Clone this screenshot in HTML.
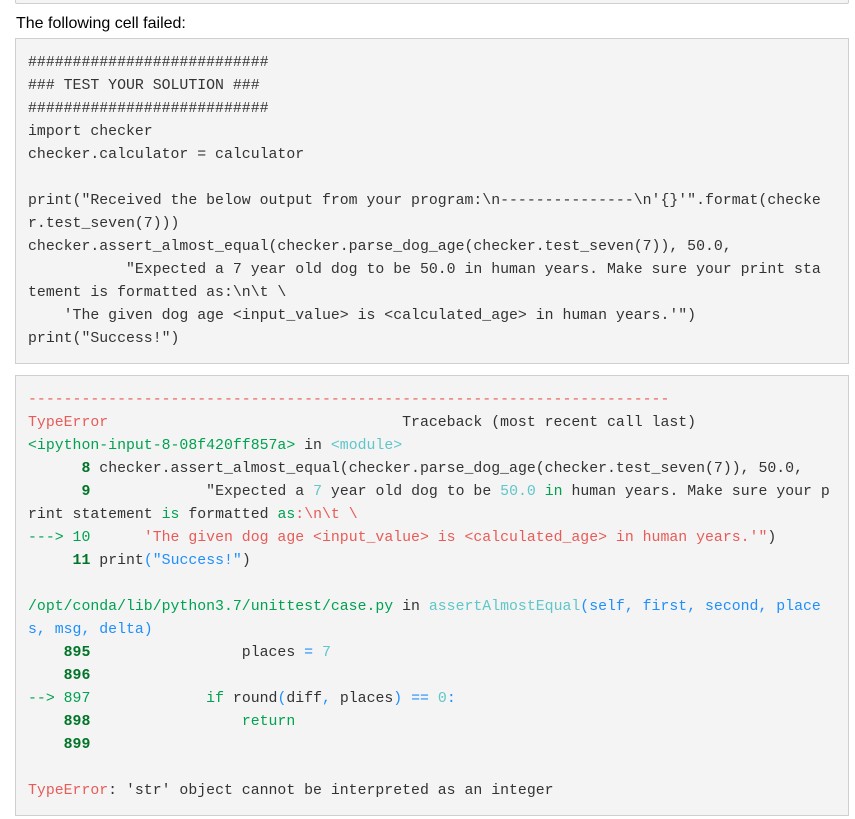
<!DOCTYPE html>
<html><head><meta charset="utf-8"><style>
body{margin:0;background:#fff;width:855px;height:819px;overflow:hidden;position:relative;font-family:"Liberation Sans",Arial,sans-serif}
.box{position:absolute;left:15px;width:834px;background:#f4f4f4;border:1px solid #cfcfcf;box-sizing:border-box}
pre{margin:0;font-family:"Liberation Mono",monospace;font-size:14.85px;line-height:23px;color:#333;white-space:pre;padding-left:12px}
.r{color:#e75c58}.g{color:#00a250}.c{color:#60c6c8}.b{color:#208ffb}.n{color:#007427;font-weight:bold}
</style></head><body>
<div class="box" style="top:-20px;height:24px;border-radius:2px"></div>
<div style="position:absolute;left:16px;top:15px;font-size:16px;color:#000">The following cell failed:</div>
<div class="box" style="top:38px;height:326px"><pre style="padding-top:13px">###########################
### TEST YOUR SOLUTION ###
###########################
import checker
checker.calculator = calculator

print("Received the below output from your program:\n---------------\n'{}'".format(checke
r.test_seven(7)))
checker.assert_almost_equal(checker.parse_dog_age(checker.test_seven(7)), 50.0,
           "Expected a 7 year old dog to be 50.0 in human years. Make sure your print sta
tement is formatted as:\n\t \
    'The given dog age &lt;input_value&gt; is &lt;calculated_age&gt; in human years.'")
print("Success!")</pre></div>
<div class="box" style="top:375px;height:441px"><pre style="padding-top:13px"><span class="r">------------------------------------------------------------------------</span>
<span class="r">TypeError</span>                                 Traceback (most recent call last)
<span class="g">&lt;ipython-input-8-08f420ff857a&gt;</span> in <span class="c">&lt;module&gt;</span>
      <span class="n">8</span> checker.assert_almost_equal(checker.parse_dog_age(checker.test_seven(7)), 50.0,
      <span class="n">9</span>             "Expected a <span class="c">7</span> year old dog to be <span class="c">50.0</span> <span class="g">in</span> human years. Make sure your p
rint statement <span class="g">is</span> formatted <span class="g">as</span><span class="r">:\n\t \</span>
<span class="g">---&gt; 10</span>      <span class="r">'The given dog age &lt;input_value&gt; is &lt;calculated_age&gt; in human years.'"</span>)
     <span class="n">11</span> print<span class="b">(</span><span class="b">"Success!"</span>)

<span class="g">/opt/conda/lib/python3.7/unittest/case.py</span> in <span class="c">assertAlmostEqual</span><span class="b">(self, first, second, place
s, msg, delta)</span>
    <span class="n">895</span>                 places <span class="b">=</span> <span class="c">7</span>
    <span class="n">896</span>
<span class="g">--&gt; 897</span>             <span class="g">if</span> round<span class="b">(</span>diff<span class="b">,</span> places<span class="b">)</span> <span class="b">==</span> <span class="c">0</span><span class="b">:</span>
    <span class="n">898</span>                 <span class="g">return</span>
    <span class="n">899</span>

<span class="r">TypeError</span>: 'str' object cannot be interpreted as an integer</pre></div>
</body></html>
